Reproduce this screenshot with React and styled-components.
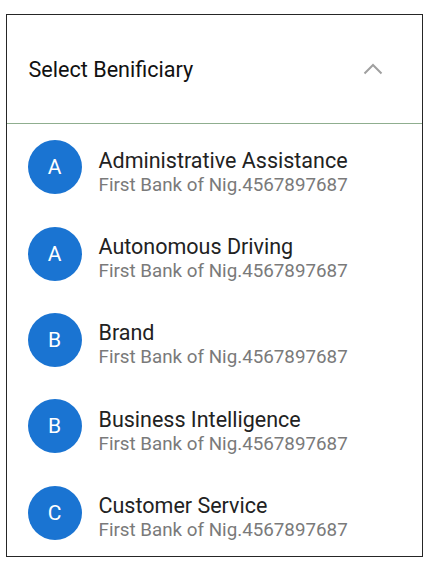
import React from "react";
import styled, { createGlobalStyle } from "styled-components";

const beneficiaries = [
    { name: "Administrative Assistance", bank: "First Bank of Nig.", account: "4567897687" },
    { name: "Autonomous Driving", bank: "First Bank of Nig.", account: "4567897687" },
    { name: "Brand", bank: "First Bank of Nig.", account: "4567897687" },
    { name: "Business Intelligence", bank: "First Bank of Nig.", account: "4567897687" },
    { name: "Customer Service", bank: "First Bank of Nig.", account: "4567897687" },
];

export default function App() {
    return (
        <>
            <GlobalStyle />
            <Page>
                <Panel>
                    <Header>
                        <h1>Select Benificiary</h1>
                        <svg width="20" height="12" viewBox="0 0 20 12">
                            <polyline points="1.5,10.5 10,2 18.5,10.5" fill="none" stroke="#a0a0a0" strokeWidth="2" />
                        </svg>
                    </Header>
                    <List>
                        {beneficiaries.map((item, index) => (
                            <Row key={index}>
                                <Avatar>{item.name[0]}</Avatar>
                                <Info>
                                    <p className="name">{item.name}</p>
                                    <p className="bank">{item.bank + item.account}</p>
                                </Info>
                            </Row>
                        ))}
                    </List>
                </Panel>
            </Page>
        </>
    );
}

const GlobalStyle = createGlobalStyle`
    * {
        box-sizing: border-box;
        margin: 0;
        padding: 0;
    }

    body {
        background-color: #FFFFFF;
        font-family: Roboto, "Liberation Sans", sans-serif;
    }
`;

const Page = styled.div`
    width: 429px;
    height: 571px;
    padding: 14px 6px 0 6px;
`;

const Panel = styled.div`
    width: 417px;
    height: 543px;
    border: 1.5px solid #262626;
    background-color: #FFFFFF;

    display: flex;
    flex-direction: column;
`;

const Header = styled.div`
    height: 109px;
    padding: 0 39px 0 21.5px;
    border-bottom: 1px solid #8fae8f;

    display: flex;
    align-items: center;
    justify-content: space-between;

    h1 {
        font-size: 21.6px;
        font-weight: 400;
        color: #111111;
    }

    svg {
        margin-top: -1px;
    }
`;

const List = styled.div`
    display: flex;
    flex-direction: column;
`;

const Row = styled.div`
    height: 86.4px;
    padding-left: 20.5px;

    display: flex;
    align-items: center;
    gap: 17px;
`;

const Avatar = styled.div`
    width: 54px;
    height: 54px;
    border-radius: 50%;
    background-color: #1a74d2;

    display: flex;
    align-items: center;
    justify-content: center;
    flex-shrink: 0;

    font-size: 21px;
    color: #FFFFFF;
`;

const Info = styled.div`
    display: flex;
    flex-direction: column;
    margin-top: 11px;

    .name {
        font-size: 21.5px;
        line-height: 25px;
        color: #222222;
    }

    .bank {
        font-size: 18.8px;
        line-height: 25px;
        color: #7a7a7a;
    }
`;
